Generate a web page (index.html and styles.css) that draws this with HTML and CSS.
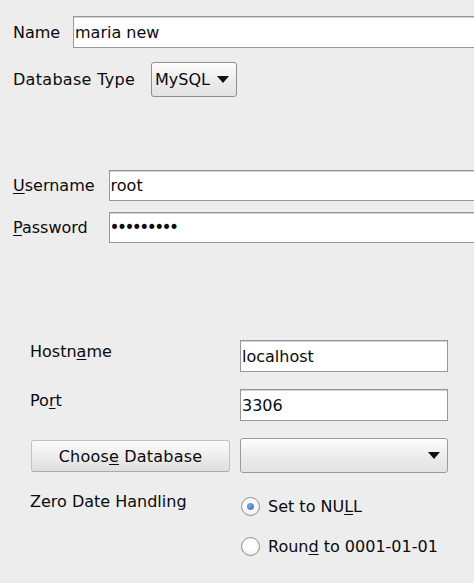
FILE: index.html
```html
<!DOCTYPE html>
<html>
<head>
<meta charset="utf-8">
<link rel="stylesheet" href="styles.css">
</head>
<body>
<div class="panel">
  <div class="row row-name">
    <span class="label name-label">Name</span>
    <div class="field wide">maria new</div>
  </div>
  <div class="row row-type">
    <span class="label type-label">Database Type</span>
    <div class="combo small">
      <span class="combo-text">MySQL</span>
      <span class="arrow"></span>
    </div>
  </div>

  <div class="creds">
    <span class="label"><span class="mn">U</span>sername</span>
    <div class="field wide">root</div>
    <span class="label"><span class="mn">P</span>assword</span>
    <div class="field wide pw">•••••••••</div>
  </div>

  <div class="conn">
    <span class="label clabel">Hostn<span class="mn">a</span>me</span>
    <div class="field box">localhost</div>
    <span class="label clabel">Po<span class="mn">r</span>t</span>
    <div class="field box">3306</div>
    <div class="button"><span>Choos<span class="mn">e</span> Database</span></div>
    <div class="combo big"><span class="arrow"></span></div>
    <span class="label clabel">Zero Date Handling</span>
    <div class="radios">
      <div class="radio-item">
        <span class="radio checked"></span>
        <span>Set to NU<span class="mn">L</span>L</span>
      </div>
      <div class="radio-item">
        <span class="radio"></span>
        <span>Roun<span class="mn">d</span> to 0001-01-01</span>
      </div>
    </div>
  </div>
</div>
</body>
</html>
```

FILE: styles.css
```css
html, body {
  margin: 0;
  padding: 0;
  width: 474px;
  height: 583px;
  overflow: hidden;
  background: #ededed;
}
body {
  font-family: "DejaVu Sans", sans-serif;
  font-size: 16px;
  color: #0a0a0a;
}
.panel {
  padding: 16px 0 0 13px;
  width: 480px;
  box-sizing: border-box;
}
.row {
  display: flex;
  align-items: center;
  column-gap: 15px;
}
.label {
  line-height: 19px;
  white-space: nowrap;
}
.name-label {
  width: 45px;
}
.type-label {
  width: 123px;
  letter-spacing: 0.3px;
}
.mn {
  text-decoration: underline;
  text-underline-offset: 2px;
}
.field {
  box-sizing: border-box;
  background: #fff;
  border: 1px solid #979797;
  box-shadow: inset 0 1px 0 #d0d0d0;
  padding: 0 2px 0 1px;
  display: flex;
  align-items: center;
  line-height: 19px;
}
.wide {
  flex: 1;
}
.row-name .field {
  height: 32px;
}
.row-type {
  margin-top: 14px;
  height: 35px;
}
.combo {
  box-sizing: border-box;
  border: 1px solid #8e8e8e;
  border-radius: 3px;
  background: linear-gradient(#fdfdfd, #ebebeb 55%, #e3e3e3);
  display: flex;
  align-items: center;
  justify-content: space-between;
}
.combo.small {
  width: 86px;
  height: 35px;
  padding: 0 7px 0 3px;
}
.combo.big {
  width: 208px;
  height: 35px;
  justify-content: flex-end;
  padding-right: 7px;
  border-color: #9a9a9a;
}
.arrow {
  width: 0;
  height: 0;
  border-left: 6px solid transparent;
  border-right: 6px solid transparent;
  border-top: 7px solid #111;
}
.creds {
  margin-top: 73px;
  display: grid;
  grid-template-columns: auto 1fr;
  column-gap: 14px;
  row-gap: 11px;
  align-items: center;
}
.creds .field {
  height: 31px;
}
.pw {
  letter-spacing: -2.6px;
  font-size: 17px;
  padding-left: 0;
}
.conn {
  margin-top: 97px;
  padding-left: 17px;
  display: grid;
  grid-template-columns: 200px 208px;
  column-gap: 10px;
  row-gap: 17px;
  align-items: start;
}
.clabel {
  padding-top: 2px;
}
.box {
  height: 32px;
}
.button {
  box-sizing: border-box;
  height: 32px;
  margin-top: 2px;
  margin-left: 1px;
  width: 199px;
  border: 1px solid #c2c2c2;
  border-bottom-color: #a9a9a9;
  border-radius: 3px;
  background: linear-gradient(#fbfbfb, #ececec 55%, #dedede);
  display: flex;
  align-items: center;
  justify-content: center;
  line-height: 19px;
  letter-spacing: 0.2px;
}
.radios {
  display: flex;
  flex-direction: column;
  row-gap: 20px;
  padding-top: 6px;
}
.radio-item {
  display: flex;
  align-items: center;
  height: 20px;
  column-gap: 8px;
  line-height: 19px;
}
.radio {
  box-sizing: border-box;
  width: 19px;
  height: 19px;
  border-radius: 50%;
  border: 1px solid #8f8f8f;
  background: radial-gradient(circle at 50% 35%, #ffffff 40%, #e6e6e6 100%);
  display: flex;
  align-items: center;
  justify-content: center;
  margin-left: 1px;
}
.radio.checked::after {
  content: "";
  width: 7px;
  height: 7px;
  border-radius: 50%;
  background: radial-gradient(circle at 40% 35%, #7fa6ef, #2f62cf);
}
```
